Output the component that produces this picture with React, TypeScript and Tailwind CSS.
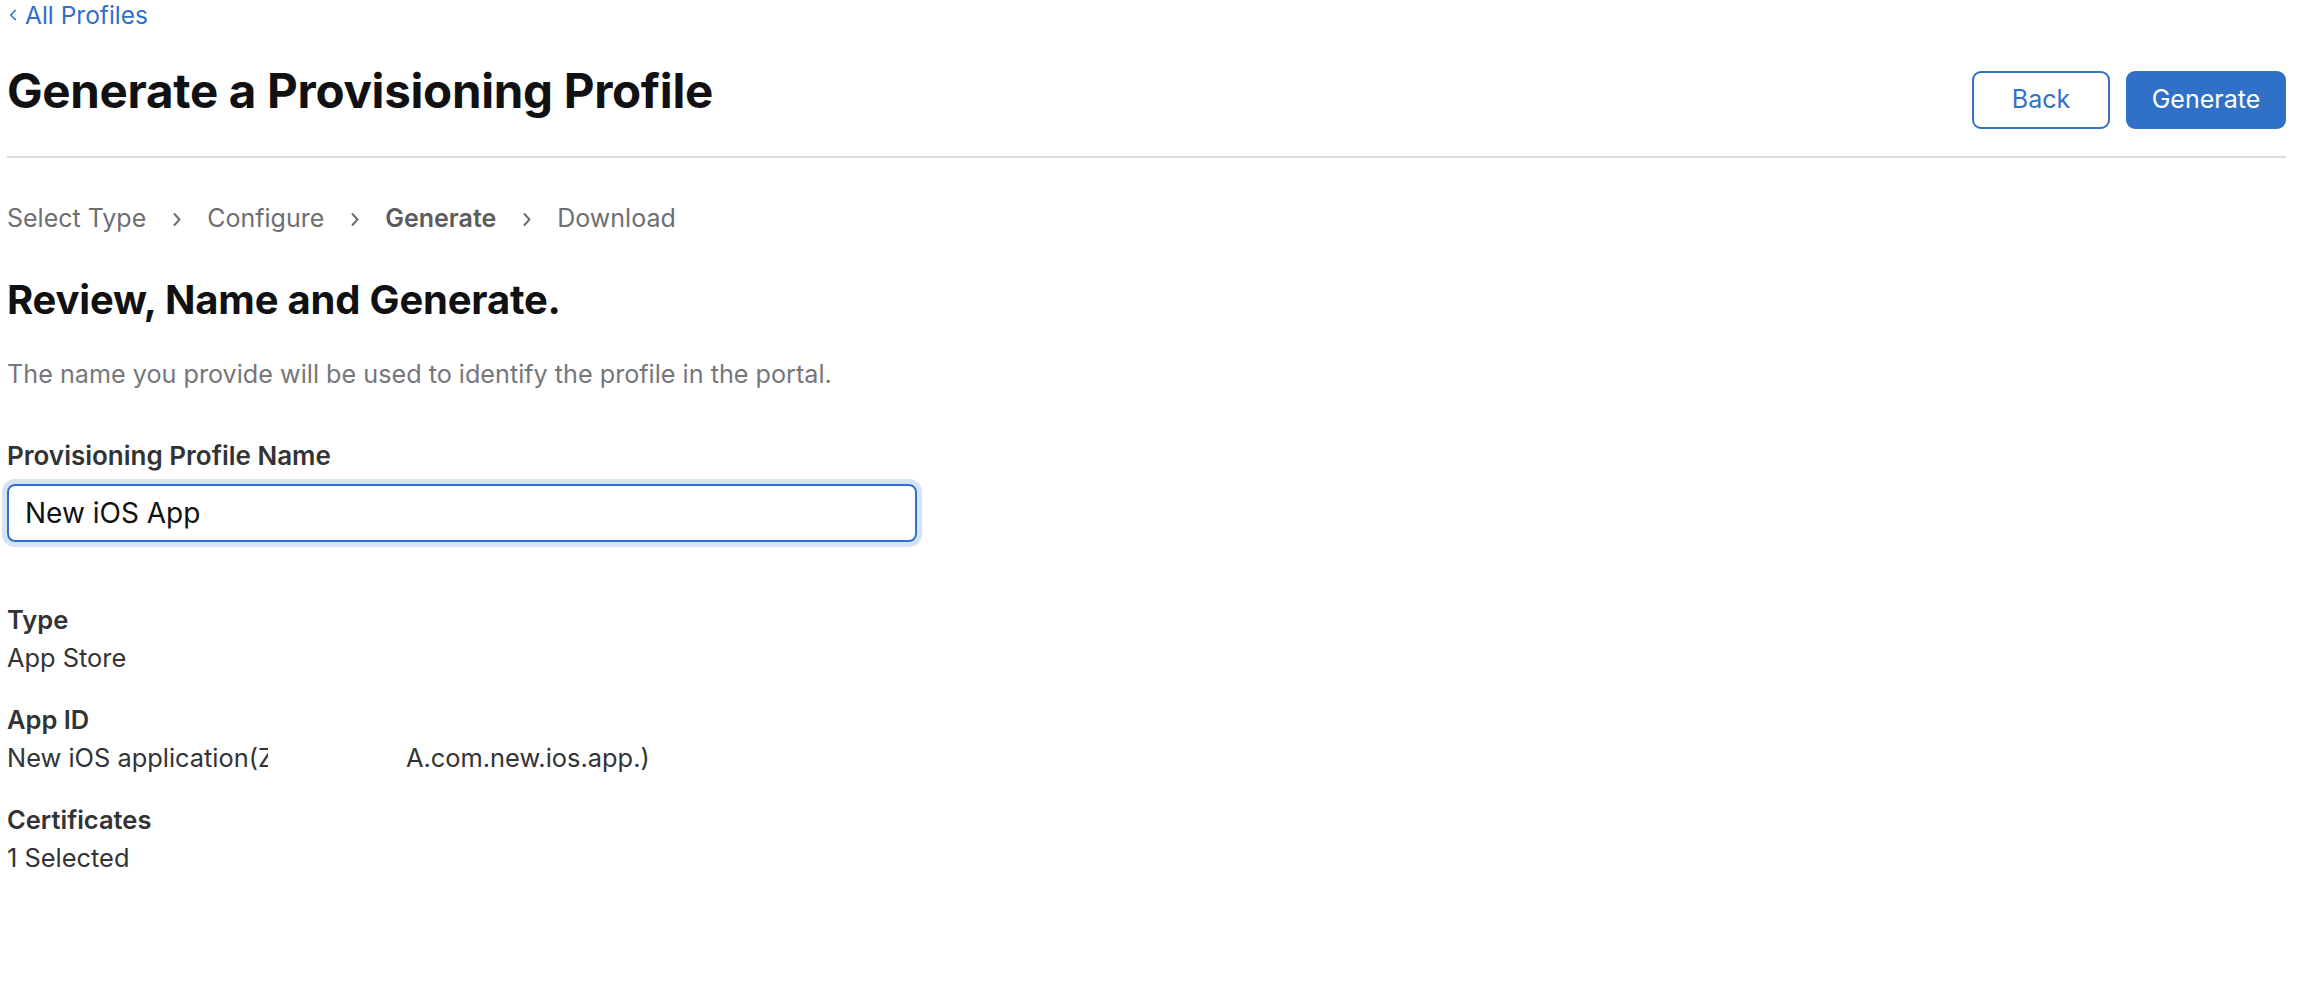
import { ChevronLeft } from "lucide-react";

function Crumb({ label, active }: { label: string; active?: boolean }) {
  return (
    <span className={active ? "font-semibold text-[#5c5c5f]" : "text-[#6e6e73]"}>
      {label}
    </span>
  );
}

function Sep() {
  return (
    <svg width="10" height="15" viewBox="0 0 10 15" className="ml-[26px] mr-[25px] mt-[2px]">
      <path d="M2.5 2 L7.5 7.5 L2.5 13" fill="none" stroke="#6e6e73" strokeWidth="2" strokeLinecap="round" strokeLinejoin="round" />
    </svg>
  );
}

function Field({ label, children }: { label: string; children: React.ReactNode }) {
  return (
    <div className="mt-[32px] first:mt-0">
      <div className="text-[25.5px] leading-[30px] font-semibold text-[#333336]">{label}</div>
      <div className="mt-[8px] text-[25.4px] leading-[30px] text-[#333336]">{children}</div>
    </div>
  );
}

export default function App() {
  return (
    <div className="min-h-screen bg-white pl-[7px] pr-[22px] font-['Inter',sans-serif] antialiased">
      <a href="#" className="flex items-center gap-[3px] text-[24.5px] leading-[30px] text-[#3071c7]">
        <ChevronLeft size={18} strokeWidth={2.2} className="-ml-[3px]" />
        All Profiles
      </a>

      <div className="mt-[35px] flex items-start justify-between">
        <h1 className="text-[47.5px] leading-[52px] font-bold tracking-[-0.3px] text-[#111113]">
          Generate a Provisioning Profile
        </h1>
        <div className="mt-[6px] flex gap-[16px]">
          <button className="h-[58px] w-[138px] rounded-[9px] border-2 border-[#3071c7] bg-white text-[25px] text-[#3071c7]">
            Back
          </button>
          <button className="h-[58px] w-[160px] rounded-[9px] bg-[#3071c7] text-[25px] text-white">
            Generate
          </button>
        </div>
      </div>

      <div className="mt-[27px] h-[2px] bg-[#dcdcdc]" />

      <nav className="mt-[44px] flex items-center text-[25px] leading-[32px]">
        <Crumb label="Select Type" />
        <Sep />
        <Crumb label="Configure" />
        <Sep />
        <Crumb label="Generate" active />
        <Sep />
        <Crumb label="Download" />
      </nav>

      <h2 className="mt-[45px] text-[40px] leading-[42px] font-bold tracking-[-0.2px] text-[#111113]">
        Review, Name and Generate.
      </h2>

      <p className="mt-[38px] text-[25.2px] leading-[30px] text-[#76767b]">
        The name you provide will be used to identify the profile in the portal.
      </p>

      <label className="mt-[52px] block text-[26px] leading-[30px] font-semibold text-[#333336]">
        Provisioning Profile Name
      </label>
      <input
        defaultValue="New iOS App"
        className="mt-[13px] block h-[58px] w-[910px] rounded-[8px] border-2 border-[#3071c7] px-[16px] text-[28px] font-normal text-[#111] shadow-[0_0_0_5px_#d5e3f5] outline-none"
      />

      <div className="mt-[63px]">
        <Field label="Type">App Store</Field>
        <Field label="App ID">
          <span className="flex whitespace-nowrap">
            <span className="inline-block w-[261px] overflow-hidden">New iOS application(Z</span>
            <span className="ml-[138px]">A.com.new.ios.app.)</span>
          </span>
        </Field>
        <Field label="Certificates">1 Selected</Field>
      </div>
    </div>
  );
}
